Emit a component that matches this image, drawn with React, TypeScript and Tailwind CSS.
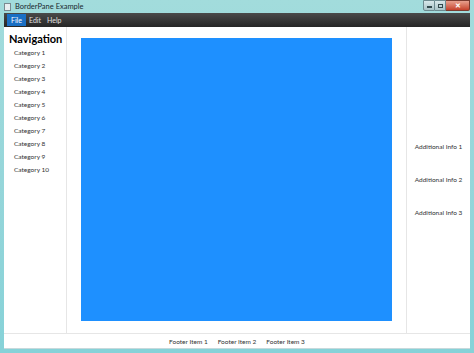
import React from 'react';

const categories = Array.from({ length: 10 }, (_, i) => `Category ${i + 1}`);
const infos = ['Additional Info 1', 'Additional Info 2', 'Additional Info 3'];
const footerItems = ['Footer Item 1', 'Footer Item 2', 'Footer Item 3'];

const font = { fontFamily: 'Lato, "Open Sans", sans-serif' };

const TitleBar: React.FC = () => (
  <div className="h-[13px] flex items-center relative">
    {/* app icon */}
    <div className="ml-[4px] w-[7px] h-[8px] bg-[#e8eef0] border border-[#7a8a90]" />
    <span className="ml-[4px] text-[7.5px] leading-none text-[#1a2a2e]">BorderPane Example</span>
    {/* window buttons */}
    <div className="absolute right-[4px] top-0 flex h-[11px]">
      <div className="w-[12px] h-full bg-gradient-to-b from-[#d8e8ea] to-[#a9c4c8] border border-[#6d8a8f] rounded-bl-[2px] flex items-end justify-center pb-[2px]">
        <div className="w-[5px] h-[2px] bg-[#33494d]" />
      </div>
      <div className="w-[11px] h-full bg-gradient-to-b from-[#d8e8ea] to-[#a9c4c8] border-y border-r border-[#6d8a8f] flex items-center justify-center">
        <div className="w-[5px] h-[4px] border border-[#33494d]" />
      </div>
      <div className="w-[24px] h-full bg-gradient-to-b from-[#e7a08e] to-[#c5402a] border-y border-r border-[#7a3b2f] rounded-br-[2px] flex items-center justify-center text-white text-[7px] font-bold leading-none">
        ✕
      </div>
    </div>
  </div>
);

const MenuBar: React.FC = () => (
  <div className="h-[14px] mx-[4px] bg-gradient-to-b from-[#4a4a4a] to-[#262626] flex items-center text-[7px] text-[#e0e0e0] leading-none">
    <span className="ml-[3px] h-[12px] px-[4px] flex items-center bg-[#1a6fc4] text-white">File</span>
    <span className="px-[3px]">Edit</span>
    <span className="px-[3px]">Help</span>
  </div>
);

export default function App() {
  return (
    <div className="w-[474px] h-[353px] bg-gradient-to-b from-[#a2dcdc] via-[#96d6da] to-[#86d2d8] flex flex-col text-[#333]" style={font}>
      <TitleBar />
      <MenuBar />
      <div className="mx-[4px] flex-1 bg-white flex flex-col border-b border-[#c7d9dc]">
        {/* body */}
        <div className="h-[306px] flex">
          {/* left navigation */}
          <div className="w-[63px] border-r border-[#e6e6e6] flex flex-col">
            <div className="pl-[5px] pt-[5px] text-[11px] font-bold leading-[14px] text-black">Navigation</div>
            <div className="pl-[10px] pt-[1px] flex flex-col">
              {categories.map((c) => (
                <div key={c} className="h-[13px] flex items-center text-[6.5px] leading-none">
                  {c}
                </div>
              ))}
            </div>
          </div>
          {/* center */}
          <div className="flex-1 flex items-center justify-center">
            <div className="w-[311px] h-[283px] bg-[#1e90ff] mb-[1px]" />
          </div>
          {/* right */}
          <div className="w-[64px] border-l border-[#e6e6e6] flex flex-col items-center justify-center gap-[24px]">
            {infos.map((t) => (
              <div key={t} className="h-[9px] flex items-center text-[6.5px] leading-none whitespace-nowrap">
                {t}
              </div>
            ))}
          </div>
        </div>
        {/* footer */}
        <div className="flex-1 border-t border-[#e6e6e6] flex items-center justify-center gap-[10px] text-[6.5px] leading-none pt-[3px]">
          {footerItems.map((f) => (
            <span key={f}>{f}</span>
          ))}
        </div>
      </div>
      <div className="h-[4px]" />
    </div>
  );
}
